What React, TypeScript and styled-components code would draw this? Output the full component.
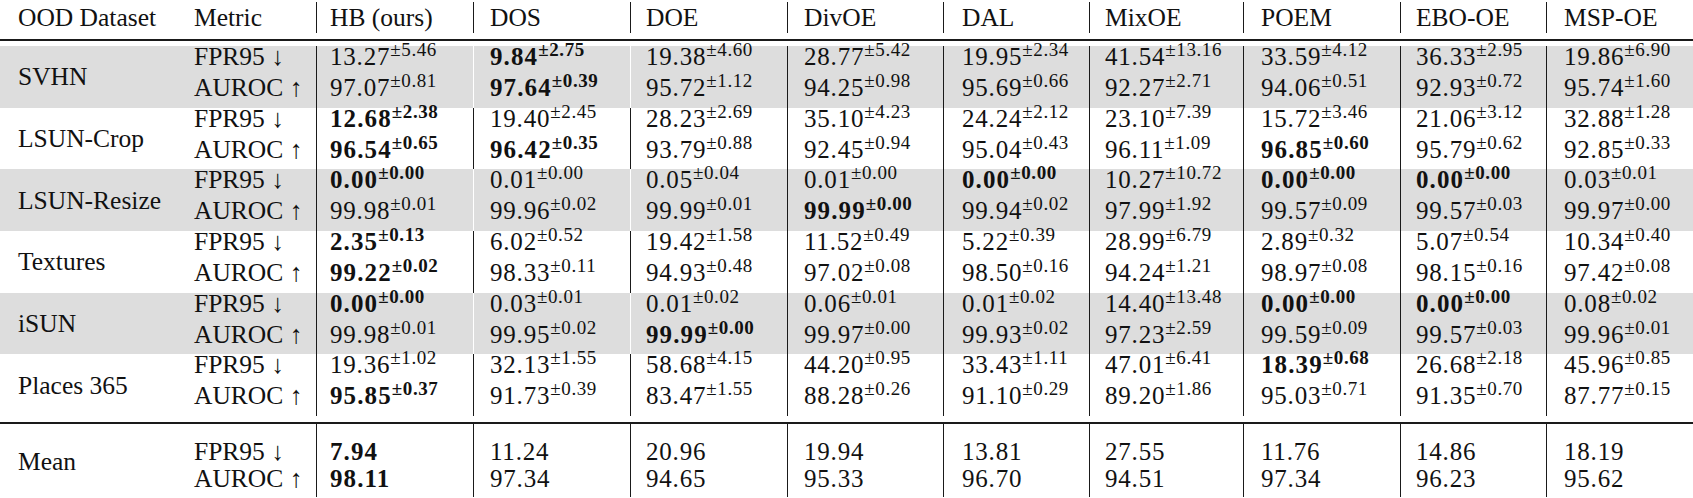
import React from 'react';
import styled, { createGlobalStyle } from 'styled-components';

// column widths and left paddings, measured from the reference
const COLS = [
    { w: 180, pad: 18 },
    { w: 136, pad: 14 },
    { w: 157, pad: 13 },
    { w: 157, pad: 16 },
    { w: 157, pad: 15 },
    { w: 156, pad: 16 },
    { w: 146, pad: 18 },
    { w: 154, pad: 15 },
    { w: 157, pad: 17 },
    { w: 146, pad: 15 },
    { w: 147, pad: 17 },
];

const TEMPLATE = COLS.map((c) => `${c.w}px`).join(' ');

const METHODS = ['HB (ours)', 'DOS', 'DOE', 'DivOE', 'DAL', 'MixOE', 'POEM', 'EBO-OE', 'MSP-OE'];

// "*" marks a bold entry
interface Block {
    name: string;
    shaded: boolean;
    fpr: string[];
    auroc: string[];
}

const BLOCKS: Block[] = [
    {
        name: 'SVHN',
        shaded: true,
        fpr: ['13.27±5.46', '*9.84±2.75', '19.38±4.60', '28.77±5.42', '19.95±2.34', '41.54±13.16', '33.59±4.12', '36.33±2.95', '19.86±6.90'],
        auroc: ['97.07±0.81', '*97.64±0.39', '95.72±1.12', '94.25±0.98', '95.69±0.66', '92.27±2.71', '94.06±0.51', '92.93±0.72', '95.74±1.60'],
    },
    {
        name: 'LSUN-Crop',
        shaded: false,
        fpr: ['*12.68±2.38', '19.40±2.45', '28.23±2.69', '35.10±4.23', '24.24±2.12', '23.10±7.39', '15.72±3.46', '21.06±3.12', '32.88±1.28'],
        auroc: ['*96.54±0.65', '*96.42±0.35', '93.79±0.88', '92.45±0.94', '95.04±0.43', '96.11±1.09', '*96.85±0.60', '95.79±0.62', '92.85±0.33'],
    },
    {
        name: 'LSUN-Resize',
        shaded: true,
        fpr: ['*0.00±0.00', '0.01±0.00', '0.05±0.04', '0.01±0.00', '*0.00±0.00', '10.27±10.72', '*0.00±0.00', '*0.00±0.00', '0.03±0.01'],
        auroc: ['99.98±0.01', '99.96±0.02', '99.99±0.01', '*99.99±0.00', '99.94±0.02', '97.99±1.92', '99.57±0.09', '99.57±0.03', '99.97±0.00'],
    },
    {
        name: 'Textures',
        shaded: false,
        fpr: ['*2.35±0.13', '6.02±0.52', '19.42±1.58', '11.52±0.49', '5.22±0.39', '28.99±6.79', '2.89±0.32', '5.07±0.54', '10.34±0.40'],
        auroc: ['*99.22±0.02', '98.33±0.11', '94.93±0.48', '97.02±0.08', '98.50±0.16', '94.24±1.21', '98.97±0.08', '98.15±0.16', '97.42±0.08'],
    },
    {
        name: 'iSUN',
        shaded: true,
        fpr: ['*0.00±0.00', '0.03±0.01', '0.01±0.02', '0.06±0.01', '0.01±0.02', '14.40±13.48', '*0.00±0.00', '*0.00±0.00', '0.08±0.02'],
        auroc: ['99.98±0.01', '99.95±0.02', '*99.99±0.00', '99.97±0.00', '99.93±0.02', '97.23±2.59', '99.59±0.09', '99.57±0.03', '99.96±0.01'],
    },
    {
        name: 'Places 365',
        shaded: false,
        fpr: ['19.36±1.02', '32.13±1.55', '58.68±4.15', '44.20±0.95', '33.43±1.11', '47.01±6.41', '*18.39±0.68', '26.68±2.18', '45.96±0.85'],
        auroc: ['*95.85±0.37', '91.73±0.39', '83.47±1.55', '88.28±0.26', '91.10±0.29', '89.20±1.86', '95.03±0.71', '91.35±0.70', '87.77±0.15'],
    },
];

const MEAN = {
    fpr: ['*7.94', '11.24', '20.96', '19.94', '13.81', '27.55', '11.76', '14.86', '18.19'],
    auroc: ['*98.11', '97.34', '94.65', '95.33', '96.70', '94.51', '97.34', '96.23', '95.62'],
};

const GlobalStyle = createGlobalStyle`
    html, body {
        margin: 0;
        padding: 0;
        background: #ffffff;
    }
    body {
        font-family: "Liberation Serif", "Times New Roman", serif;
        color: #111111;
        -webkit-font-smoothing: antialiased;
    }
`;

const Table = styled.div`
    width: 1693px;
    font-family: "Liberation Serif", "Times New Roman", serif;
    font-size: 25.5px;
    color: #111111;
`;

const HeaderRow = styled.div`
    display: grid;
    grid-template-columns: ${TEMPLATE};
    padding-top: 2px;
    margin-bottom: 6px;
`;

const HeadCell = styled.div<{ $pad: number; $ruled: boolean }>`
    height: 31px;
    line-height: 31px;
    padding-left: ${(p) => p.$pad}px;
    border-left: ${(p) => (p.$ruled ? '1px solid #1a1a1a' : 'none')};
    white-space: nowrap;
`;

const Rule = styled.div`
    height: 2px;
    background: #1a1a1a;
`;

const Body = styled.div`
    padding: 5px 0 6px;
`;

const BlockGrid = styled.div<{ $shaded: boolean; $rows: string }>`
    display: grid;
    grid-template-columns: ${TEMPLATE};
    grid-template-rows: ${(p) => p.$rows};
    background: ${(p) => (p.$shaded ? '#dddddd' : 'transparent')};
`;

const NameCell = styled.div<{ $pad: number; $offset: number }>`
    grid-row: 1 / span 2;
    grid-column: 1;
    align-self: center;
    line-height: 31px;
    padding-left: ${(p) => p.$pad}px;
    padding-top: ${(p) => p.$offset}px;
    white-space: nowrap;
`;

const Cell = styled.div<{ $pad: number; $top: number; $line: 'none' | 'dark' | 'white' }>`
    line-height: 21px;
    padding-left: ${(p) => p.$pad}px;
    padding-top: ${(p) => p.$top}px;
    border-left: ${(p) =>
        p.$line === 'none' ? 'none' : `1px solid ${p.$line === 'white' ? '#ffffff' : '#1a1a1a'}`};
    white-space: nowrap;
`;

const Num = styled.span<{ $bold: boolean }>`
    font-size: 25px;
    font-weight: ${(p) => (p.$bold ? 700 : 400)};
    letter-spacing: ${(p) => (p.$bold ? '1.1px' : '0.8px')};
`;

const Sup = styled.span`
    font-size: 19px;
    line-height: 0;
    vertical-align: 9px;
    letter-spacing: 0.6px;
`;

const Value: React.FC<{ raw: string }> = ({ raw }) => {
    const bold = raw.startsWith('*');
    const [main, std] = raw.replace('*', '').split('±');
    return (
        <Num $bold={bold}>
            {main}
            {std !== undefined && <Sup>±{std}</Sup>}
        </Num>
    );
};

// in the shaded rows the rules either side of DOS are drawn over in white
const lineFor = (col: number, shaded: boolean): 'none' | 'dark' | 'white' => {
    if (col < 2) return 'none';
    if (shaded && (col === 3 || col === 4)) return 'white';
    return 'dark';
};

const DataBlock: React.FC<{
    name: string;
    shaded: boolean;
    fpr: string[];
    auroc: string[];
    rows: string;
    tops: [number, number];
    nameOffset: number;
}> = ({ name, shaded, fpr, auroc, rows, tops, nameOffset }) => (
    <BlockGrid $shaded={shaded} $rows={rows}>
        <NameCell $pad={COLS[0].pad} $offset={nameOffset}>{name}</NameCell>
        {[
            { label: 'FPR95 ↓', values: fpr, top: tops[0] },
            { label: 'AUROC ↑', values: auroc, top: tops[1] },
        ].map((row, r) => (
            <React.Fragment key={row.label}>
                <Cell $pad={COLS[1].pad} $top={row.top} $line="none" style={{ gridRow: r + 1, gridColumn: 2 }}>
                    {row.label}
                </Cell>
                {row.values.map((v, i) => (
                    <Cell
                        key={i}
                        $pad={COLS[i + 2].pad}
                        $top={row.top}
                        $line={lineFor(i + 2, shaded)}
                        style={{ gridRow: r + 1, gridColumn: i + 3 }}
                    >
                        <Value raw={v} />
                    </Cell>
                ))}
            </React.Fragment>
        ))}
    </BlockGrid>
);

export default function App() {
    const heads = ['OOD Dataset', 'Metric', ...METHODS];
    return (
        <>
            <GlobalStyle />
            <Table>
                <HeaderRow>
                    {heads.map((h, i) => (
                        <HeadCell key={h} $pad={COLS[i].pad} $ruled={i >= 2}>
                            {h}
                        </HeadCell>
                    ))}
                </HeaderRow>
                <Rule />
                <Body>
                    {BLOCKS.map((b) => (
                        <DataBlock
                            key={b.name}
                            {...b}
                            rows="31px 30.67px"
                            tops={[0, 0]}
                            nameOffset={0}
                        />
                    ))}
                </Body>
                <Rule />
                <DataBlock
                    name="Mean"
                    shaded={false}
                    fpr={MEAN.fpr}
                    auroc={MEAN.auroc}
                    rows="44px 29px"
                    tops={[17, 0]}
                    nameOffset={3}
                />
            </Table>
        </>
    );
}
